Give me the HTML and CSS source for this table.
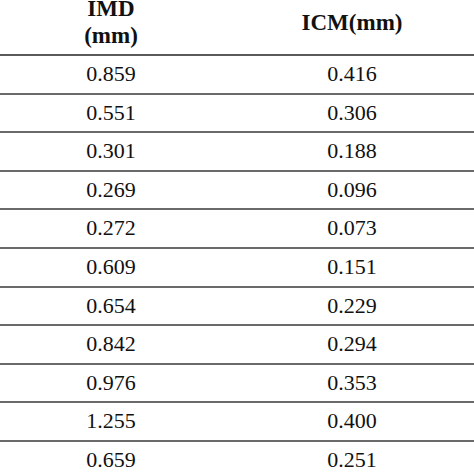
FILE: index.html
```html
<!DOCTYPE html>
<html>
<head>
<meta charset="utf-8">
<link rel="stylesheet" href="styles.css">
</head>
<body>
<div class="table">
  <div class="row head">
    <div class="cell c1"><div class="hl1">IMD</div><div class="hl2">(mm)</div></div>
    <div class="cell c2"><div class="h1line">ICM(mm)</div></div>
  </div>
  <div class="row"><div class="cell c1">0.859</div><div class="cell c2">0.416</div></div>
  <div class="row"><div class="cell c1">0.551</div><div class="cell c2">0.306</div></div>
  <div class="row"><div class="cell c1">0.301</div><div class="cell c2">0.188</div></div>
  <div class="row"><div class="cell c1">0.269</div><div class="cell c2">0.096</div></div>
  <div class="row"><div class="cell c1">0.272</div><div class="cell c2">0.073</div></div>
  <div class="row"><div class="cell c1">0.609</div><div class="cell c2">0.151</div></div>
  <div class="row"><div class="cell c1">0.654</div><div class="cell c2">0.229</div></div>
  <div class="row"><div class="cell c1">0.842</div><div class="cell c2">0.294</div></div>
  <div class="row"><div class="cell c1">0.976</div><div class="cell c2">0.353</div></div>
  <div class="row"><div class="cell c1">1.255</div><div class="cell c2">0.400</div></div>
  <div class="row last"><div class="cell c1">0.659</div><div class="cell c2">0.251</div></div>
</div>
</body>
</html>
```
FILE: styles.css
```css
html, body {
  margin: 0;
  padding: 0;
  background: #fff;
  overflow: hidden;
  width: 474px;
  height: 474px;
}
.table {
  display: flex;
  flex-direction: column;
  width: 482px;
  font-family: "Liberation Serif", "DejaVu Serif", serif;
  font-size: 22px;
  color: #111;
}
.row {
  display: flex;
  height: 36.6px;
  border-bottom: 2px solid #6a6a6a;
  line-height: 36.6px;
}
.row.head {
  height: 54px;
  border-bottom: 2px solid #5a5a5a;
  font-weight: bold;
  font-size: 23px;
  line-height: 27px;
}
.row.last {
  border-bottom: none;
}
.cell {
  text-align: center;
}
.c1 {
  width: 222px;
}
.c2 {
  width: 260px;
}
.hl1 {
  line-height: 17px;
}
.hl2 {
  line-height: 37px;
}
.h1line {
  padding-top: 9px;
}
```
